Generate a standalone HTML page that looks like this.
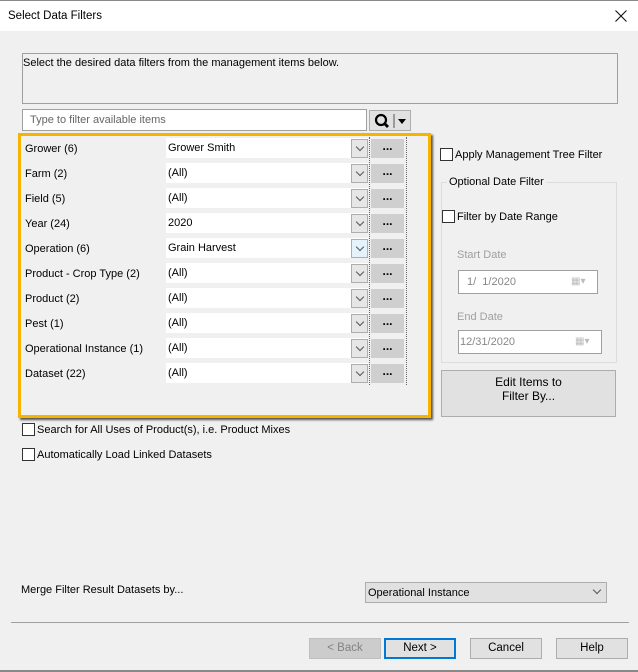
<!DOCTYPE html>
<html><head><style>
*{box-sizing:border-box;margin:0;padding:0}
body{width:638px;height:672px;background:#f0f0f0;font-family:"Liberation Sans",sans-serif;font-size:11px;color:#000;position:relative;overflow:hidden}
.a{position:absolute}
.title{left:0;top:0;width:638px;height:31px;background:#fff;border-top:1px solid #888}
.combo{background:#fff;height:20px;width:202px;left:166px}
.combo span{position:absolute;left:2px;top:4px}
.dd{position:absolute;right:0;top:1px;width:17px;height:19px;background:#e6e6e6;border:1px solid #adadad}
.dd:after{content:"";position:absolute;left:5px;top:4px;width:5px;height:5px;border-right:1px solid #555;border-bottom:1px solid #555;transform:rotate(45deg)}
.dots{left:371px;width:33px;height:19px;background:#cfcfcf;font-weight:bold;text-align:center;line-height:14px;font-size:12px}
.lbl{left:25px}
.cb{width:13px;height:13px;border:1px solid #333;background:#fff}
.btn{top:638px;height:21px;width:72px;border:1px solid #adadad;background:#e1e1e1;text-align:center;line-height:19px;font-size:11.5px}
</style></head><body>
<div class="a title"><span class="a" style="left:8px;top:9px;font-size:11.5px">Select Data Filters</span><svg class="a" style="left:615px;top:9px" width="12" height="12"><path d="M0.5 0.5L11.5 11.5M11.5 0.5L0.5 11.5" stroke="#111" stroke-width="1.1"/></svg></div>
<div class="a" style="left:22px;top:53px;width:596px;height:51px;border:1px solid #a0a0a0;background:#f0f0f0"><span class="a" style="left:0;top:3px">Select the desired data filters from the management items below.</span></div>
<div class="a" style="left:22px;top:109px;width:345px;height:22px;background:#fff;border:1px solid #a0a0a0"><span class="a" style="left:7px;top:4px;color:#666">Type to filter available items</span></div>
<div class="a" style="left:369px;top:110px;width:42px;height:21px;background:#e1e1e1;border:1px solid #adadad">
<svg width="40" height="20" style="position:absolute;left:0;top:0"><circle cx="11" cy="9" r="5" fill="none" stroke="#000" stroke-width="2.2"/><line x1="14.5" y1="12.5" x2="18" y2="16" stroke="#000" stroke-width="2.8"/><line x1="24" y1="3" x2="24" y2="17" stroke="#555"/><path d="M28 8h8l-4 5z" fill="#000"/></svg></div>
<div class="a" style="left:18px;top:133px;width:413px;height:285px;border:3px solid #f6b400;box-shadow:2px 2px 2px #555;background:#f0f0f0"></div>
<div class="a" style="left:369px;top:137px;height:248px;border-left:1px dotted #666"></div>
<div class="a" style="left:406px;top:137px;height:248px;border-left:1px dotted #666"></div>

<div class="a lbl" style="top:143px">Grower (6)</div><div class="a combo" style="top:138px"><span>Grower Smith</span><div class="dd"></div></div><div class="a dots" style="top:139px">...</div>
<div class="a lbl" style="top:168px">Farm (2)</div><div class="a combo" style="top:163px"><span>(All)</span><div class="dd"></div></div><div class="a dots" style="top:164px">...</div>
<div class="a lbl" style="top:193px">Field (5)</div><div class="a combo" style="top:188px"><span>(All)</span><div class="dd"></div></div><div class="a dots" style="top:189px">...</div>
<div class="a lbl" style="top:218px">Year (24)</div><div class="a combo" style="top:213px"><span>2020</span><div class="dd"></div></div><div class="a dots" style="top:214px">...</div>
<div class="a lbl" style="top:243px">Operation (6)</div><div class="a combo" style="top:238px"><span>Grain Harvest</span><div class="dd" style="background:#e5f1fb"></div></div><div class="a dots" style="top:239px">...</div>
<div class="a lbl" style="top:268px">Product - Crop Type (2)</div><div class="a combo" style="top:263px"><span>(All)</span><div class="dd"></div></div><div class="a dots" style="top:264px">...</div>
<div class="a lbl" style="top:293px">Product (2)</div><div class="a combo" style="top:288px"><span>(All)</span><div class="dd"></div></div><div class="a dots" style="top:289px">...</div>
<div class="a lbl" style="top:318px">Pest (1)</div><div class="a combo" style="top:313px"><span>(All)</span><div class="dd"></div></div><div class="a dots" style="top:314px">...</div>
<div class="a lbl" style="top:343px">Operational Instance (1)</div><div class="a combo" style="top:338px"><span>(All)</span><div class="dd"></div></div><div class="a dots" style="top:339px">...</div>
<div class="a lbl" style="top:368px">Dataset (22)</div><div class="a combo" style="top:363px"><span>(All)</span><div class="dd"></div></div><div class="a dots" style="top:364px">...</div>

<div class="a cb" style="left:440px;top:148px"></div><span class="a" style="left:455px;top:149px">Apply Management Tree Filter</span>
<div class="a" style="left:441px;top:182px;width:176px;height:181px;border:1px solid #dcdcdc"></div>
<span class="a" style="left:447px;top:176px;background:#f0f0f0;padding:0 2px">Optional Date Filter</span>
<div class="a cb" style="left:442px;top:210px"></div><span class="a" style="left:457px;top:211px">Filter by Date Range</span>
<span class="a" style="left:457px;top:249px;color:#a0a0a0">Start Date</span>
<div class="a" style="left:458px;top:270px;width:140px;height:24px;background:#fff;border:1px solid #a0a0a0"><span class="a" style="left:8px;top:5px;color:#888">1/&nbsp; 1/2020</span><span class="a" style="left:112px;top:5px;color:#bbb;font-size:10px">▦▾</span></div>
<span class="a" style="left:457px;top:311px;color:#a0a0a0">End Date</span>
<div class="a" style="left:458px;top:330px;width:144px;height:24px;background:#fff;border:1px solid #a0a0a0"><span class="a" style="left:1px;top:5px;color:#888">12/31/2020</span><span class="a" style="left:116px;top:5px;color:#bbb;font-size:10px">▦▾</span></div>
<div class="a" style="left:441px;top:370px;width:175px;height:47px;background:#e1e1e1;border:1px solid #adadad;text-align:center;font-size:12px;padding-top:4px;line-height:14px">Edit Items to<br>Filter By...</div>

<div class="a cb" style="left:22px;top:423px"></div><span class="a" style="left:37px;top:424px">Search for All Uses of Product(s), i.e. Product Mixes</span>
<div class="a cb" style="left:22px;top:448px"></div><span class="a" style="left:37px;top:449px">Automatically Load Linked Datasets</span>
<span class="a" style="left:21px;top:584px">Merge Filter Result Datasets by...</span>
<div class="a" style="left:365px;top:582px;width:242px;height:21px;background:#e1e1e1;border:1px solid #adadad"><span class="a" style="left:2px;top:4px">Operational Instance</span><div class="a" style="left:228px;top:4px;width:6px;height:6px;border-right:1px solid #555;border-bottom:1px solid #555;transform:rotate(45deg)"></div></div>
<div class="a" style="left:11px;top:622px;width:618px;border-top:1px solid #a0a0a0"></div>
<div class="a btn" style="left:309px;background:#cccccc;border-color:#bfbfbf;color:#838383">&lt; Back</div>
<div class="a btn" style="left:384px;border:2px solid #0078d7;line-height:17px">Next &gt;</div>
<div class="a btn" style="left:470px">Cancel</div>
<div class="a btn" style="left:556px">Help</div>
<div class="a" style="left:0;top:670px;width:638px;border-top:2px solid #888"></div>
</body></html>
